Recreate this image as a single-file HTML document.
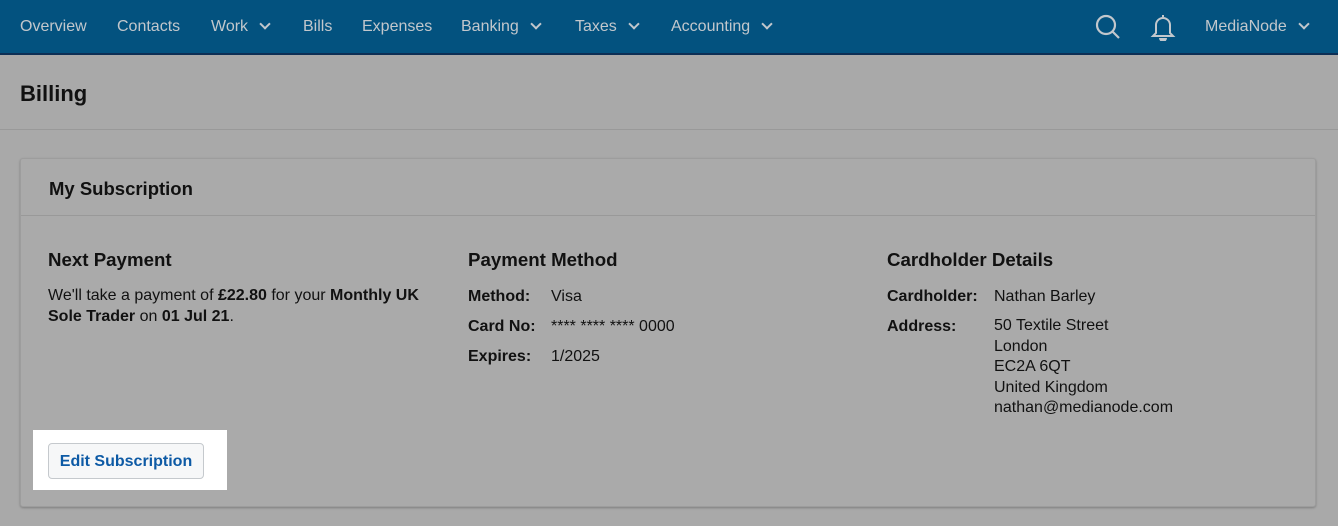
<!DOCTYPE html>
<html><head><meta charset="utf-8"><style>
*{margin:0;padding:0;box-sizing:border-box}
body{width:1338px;height:526px;overflow:hidden;background:#a9a9a9;font-family:"Liberation Sans",Arial,sans-serif;color:#111;position:relative}
.nav{position:absolute;left:0;top:0;width:1338px;height:55px;background:#03527f;border-bottom:2px solid #0d2f55}
.nav span{position:absolute;top:18px;font-size:16px;color:#c2c7cc}
.chev{display:inline-block;width:8px;height:8px;border-right:2px solid #c2c7cc;border-bottom:2px solid #c2c7cc;transform:rotate(45deg);margin-left:13px;position:relative;top:-3px}
.hdr{position:absolute;left:0;top:55px;width:1338px;height:75px;border-bottom:1px solid #999}
.hdr h1{position:absolute;left:20px;top:26px;font-size:22px;font-weight:bold;color:#111}
.card{position:absolute;left:20px;top:158px;width:1296px;height:349px;background:#aaa;border:1px solid #9d9d9d;border-radius:3px;box-shadow:0 1px 2px rgba(0,0,0,.25)}
.card .ct{height:57px;border-bottom:1px solid #999;padding:19px 0 0 28px;font-size:18.5px;font-weight:bold}
.t{position:absolute;font-size:16px;line-height:21px}
h3{position:absolute;font-size:18.7px;font-weight:bold}
b{font-weight:bold}
.white{position:absolute;left:33px;top:430px;width:194px;height:60px;background:#fff}
.btn{position:absolute;left:48px;top:443px;width:156px;height:36px;border:1px solid #c5c9cd;border-radius:4px;background:#f6f7f8;color:#0d5aa5;font-weight:bold;font-size:16px;text-align:center;line-height:36px}
</style></head><body>
<div class="nav">
<span style="left:20px">Overview</span>
<span style="left:117px">Contacts</span>
<span style="left:211px">Work<i class="chev"></i></span>
<span style="left:303px">Bills</span>
<span style="left:362px">Expenses</span>
<span style="left:461px">Banking<i class="chev"></i></span>
<span style="left:575px">Taxes<i class="chev"></i></span>
<span style="left:671px">Accounting<i class="chev"></i></span>
<svg style="position:absolute;left:1094px;top:13px" width="28" height="28" viewBox="0 0 28 28" fill="none" stroke="#c2c7cc" stroke-width="2.2"><circle cx="12" cy="12" r="9"/><path d="M18.5 18.5L25 25"/></svg>
<svg style="position:absolute;left:1150px;top:13px" width="26" height="28" viewBox="0 0 26 28" fill="none" stroke="#c2c7cc" stroke-width="2"><path d="M13 2v2M6 20V12a7 7 0 0 1 14 0v8l3 3H3z"/><path d="M10 25a3 3 0 0 0 6 0" fill="#c2c7cc"/></svg>
<span style="left:1205px">MediaNode<i class="chev"></i></span>
</div>
<div class="hdr"><h1>Billing</h1></div>
<div class="card"><div class="ct">My Subscription</div></div>
<h3 style="left:48px;top:249px">Next Payment</h3>
<div class="t" style="left:48px;top:285px;width:420px">We'll take a payment of <b>£22.80</b> for your <b>Monthly UK<br>Sole Trader</b> on <b>01 Jul 21</b>.</div>
<h3 style="left:468px;top:249px">Payment Method</h3>
<div class="t" style="left:468px;top:286px"><b>Method:</b></div><div class="t" style="left:551px;top:286px">Visa</div>
<div class="t" style="left:468px;top:316px"><b>Card No:</b></div><div class="t" style="left:551px;top:316px">**** **** **** 0000</div>
<div class="t" style="left:468px;top:346px"><b>Expires:</b></div><div class="t" style="left:551px;top:346px">1/2025</div>
<h3 style="left:887px;top:249px">Cardholder Details</h3>
<div class="t" style="left:887px;top:286px"><b>Cardholder:</b></div><div class="t" style="left:994px;top:286px">Nathan Barley</div>
<div class="t" style="left:887px;top:316px"><b>Address:</b></div><div class="t" style="left:994px;top:316px;line-height:20.5px">50 Textile Street<br>London<br>EC2A 6QT<br>United Kingdom<br>nathan@medianode.com</div>
<div class="white"></div>
<div class="btn">Edit Subscription</div>
</body></html>
